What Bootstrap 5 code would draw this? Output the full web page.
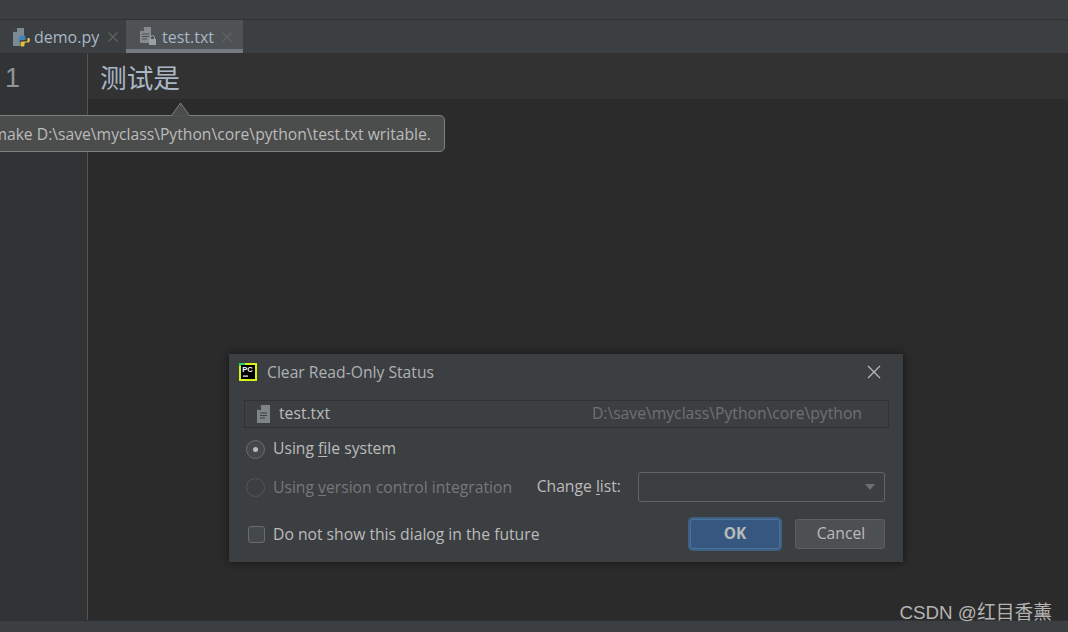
<!DOCTYPE html>
<html lang="zh">
<head>
<meta charset="utf-8">
<title>Clear Read-Only Status</title>
<link href="https://cdn.jsdelivr.net/npm/bootstrap@5.3.0/dist/css/bootstrap.min.css" rel="stylesheet">
<style>
html,body{height:100%;overflow:hidden}
body{background:#2b2b2b;font-family:"Open Sans","Noto Sans CJK SC",sans-serif;font-size:15.7px;color:#bbb;position:relative;width:1068px;height:632px}
.ide{height:632px}
.topbar{height:20px;background:#3c3f41;border-bottom:1px solid #323232;flex:none}
.tabbar{height:34px;background:#3c3f41;flex:none;border-bottom:1px solid #323232;font-size:16px}
.ftab{height:33px;color:#a9b7c6;line-height:1.2}
.ftab-a{width:126px;padding:1px 0 0 12px;gap:4px}
.ftab-a .tabx{margin-left:4px}
.ftab-b{width:117px;padding:5px 0 0 13px;gap:6px;background:#4e5254;border-bottom:4px solid #747a80}
.ftab-b svg.fi{margin-top:-2px}
.ftab span{padding-top:2px}
.tabx{color:#5f6364;flex:none}
.ftab-b .tabx{margin-left:1px}
.edit{min-height:0}
.gut{width:88px;background:#313335;border-right:1px solid #555;flex:none;color:#8f969b;font-family:"Liberation Sans",sans-serif;font-size:27px;padding-left:5px;line-height:49px}
.caretrow{height:45px;background:#323232;color:#a9b7c6;font-family:"Noto Sans CJK SC",sans-serif;font-size:26.7px;line-height:45px;padding-left:12px}
.statusb{height:12px;background:#3c3f41;border-top:1px solid #323232;flex:none}
.hint{position:absolute;left:-30px;top:115px;width:475px;height:37px;background:#4b4d4d;border:1px solid #7d8083;border-radius:0 5px 5px 0;line-height:36px;text-align:right;padding-right:13px;white-space:nowrap;color:#bbb;overflow:hidden}
.hintarrow{position:absolute;left:171px;top:102px;overflow:visible}
.dlg{position:absolute;left:229px;top:354px;width:674px;height:208px;background:#3c3f41;box-shadow:0 0 8px rgba(0,0,0,.55);color:#bbb}
.dlghead{height:36px;padding-left:10px;gap:10px;padding-right:22px}
.ptitle{color:#afb1b3;padding-top:2px}
.filebox{margin:10px 14px 0 15px;height:28px;border:1px solid #323232;border-bottom-color:#2f2f2f;background:#3c3f41;padding:0 26px 0 12px;color:#bbb}
.pth{color:#6f7172}
.optrow{height:24px;margin-left:17px;gap:8px;margin-top:9px}
.optrow2{margin-top:11px;height:30px;padding-right:18px}
.muted-t{color:#777;padding-top:2px}
.rad{width:19px;height:19px;border-radius:50%;border:1px solid #6b6b6b;background:#43494a;flex:none}
.radon{background:#43494a;position:relative;border-color:#6b6b6b}
.radon::after{content:"";position:absolute;left:6px;top:6px;width:5px;height:5px;border-radius:50%;background:#bbb}
.radoff{background:transparent;border-color:#53565a}
.chlbl{margin-right:9px}
.sel{width:247px;height:30px;border:1px solid #646464;border-radius:3px;background:#3c3f41;padding-right:9px}
.selarrow{width:0;height:0;border-left:5.5px solid transparent;border-right:5.5px solid transparent;border-top:6px solid #6f6f6f}
.bottomrow{margin-top:15px;margin-left:19px;margin-right:18px;height:34px}
.bottomrow .flex-grow-1{padding-top:2px}
.chk{width:17px;height:17px;border:1px solid #6b6b6b;border-radius:3px;background:#43494a;flex:none}
.okbtn{width:90px;height:30px;background:#365880;border:1px solid #4c7096;border-radius:3px;color:#bbb;font-weight:700;font-size:15.4px;padding:0;box-shadow:0 0 0 2px #3d6185;margin-right:15px}
.canbtn{width:90px;height:30px;background:#4c5052;border:1px solid #5e6060;border-radius:3px;color:#bbb;font-size:15.7px;padding:0 0 0 2px}
.canbtn:hover,.okbtn:hover{color:#bbb}
.wm{position:absolute;right:16px;top:601px;font-family:"Liberation Sans","Noto Sans CJK SC",sans-serif;font-size:18.8px;color:#b4b4b4;line-height:24px;white-space:nowrap}
u{text-underline-offset:2px}
</style>
</head>
<body>
<div class="ide d-flex flex-column">
  <div class="topbar"></div>
  <div class="tabbar d-flex">
    <div class="ftab ftab-a d-flex align-items-center">
      <svg width="18" height="20" viewBox="0 0 18 20"><path d="M1 5l4-4h7v9H8v9H1z" fill="#7d8a92"/><path d="M5 1v4H1z" fill="#3c3f41"/><path d="M7 11c0-2 1-2.500 3-2.500h1.500c1.500 0 2 .5 2 2V13H9.500c-1 0-1.500.5-1.500 1.500V16H7z" fill="#3d86b8"/><path d="M18 13c0 2-1 2.500-2.500 2.500H14c-1.500 0-1.500 1-1.500 2.500 0 1-1 1.500-2 1.500-1.500 0-2-.5-2-1.500v-2c0-1 .5-1.500 1.500-1.500H14c1 0 1.500-.5 1.500-1.500V11H17c.7 0 1 1 1 2z" fill="#e8bd3c"/></svg>
      <span>demo.py</span>
      <svg class="tabx" width="12" height="12" viewBox="0 0 12 12"><path d="M1.500 1.500l9 9m0-9l-9 9" stroke="currentColor" stroke-width="1.200"/></svg>
    </div>
    <div class="ftab ftab-b d-flex align-items-center">
      <svg class="fi" width="17" height="20" viewBox="0 0 17 20"><path d="M1 5l4-4h7v16H1z" fill="#858a8e"/><path d="M5 1v4H1z" fill="#4e5254"/><path d="M3 8h7M3 10.500h7M3 13h5" stroke="#4e5254" stroke-width="1.200"/><rect x="10" y="13" width="7" height="6" fill="#9aa0a4"/><path d="M11.500 13v-1.500a2 2 0 014 0V13" fill="none" stroke="#9aa0a4" stroke-width="1"/></svg>
      <span>test.txt</span>
      <svg class="tabx" width="12" height="12" viewBox="0 0 12 12"><path d="M1.500 1.500l9 9m0-9l-9 9" stroke="currentColor" stroke-width="1.200"/></svg>
    </div>
  </div>
  <div class="edit d-flex flex-grow-1">
    <div class="gut">1</div>
    <div class="flex-grow-1">
      <div class="caretrow">测试是</div>
    </div>
  </div>
  <div class="statusb"></div>
</div>

<div class="hint">make D:\save\myclass\Python\core\python\test.txt writable.</div>
<svg class="hintarrow" width="20" height="14" viewBox="0 0 20 14"><path d="M0.500 13.500L9.500 1 18.500 13.500" fill="#4b4d4d" stroke="#7d8083"/><path d="M1 14h17" stroke="#4b4d4d" stroke-width="1.500"/></svg>

<div class="dlg" role="dialog">
  <div class="dlghead d-flex align-items-center">
    <svg width="18" height="18" viewBox="0 0 18 18"><rect width="18" height="18" fill="#d6f21a"/><rect width="6" height="3" fill="#27d06a"/><rect x="2" y="2" width="14" height="14" fill="#000"/><text x="3.200" y="8.800" font-size="7.500" font-weight="700" font-family="Liberation Sans" fill="#fff">PC</text><rect x="4" y="12.500" width="5" height="1.200" fill="#fff"/></svg>
    <span class="ptitle flex-grow-1">Clear Read-Only Status</span>
    <svg width="14" height="14" viewBox="0 0 14 14"><path d="M1 1l12 12M13 1L1 13" stroke="#b5b7b9" stroke-width="1.300"/></svg>
  </div>
  <div class="filebox d-flex align-items-center">
    <svg width="14" height="18" viewBox="0 0 14 18"><path d="M0 5l4-5h9v18H0z" fill="#7f8487"/><path d="M4 0v5H0z" fill="#3c3f41"/><path d="M3 8h7M3 10.500h7M3 13h5" stroke="#3c3f41" stroke-width="1"/></svg>
    <span class="ms-2 flex-grow-1">test.txt</span>
    <span class="pth">D:\save\myclass\Python\core\python</span>
  </div>
  <div class="optrow d-flex align-items-center">
    <span class="rad radon"></span>
    <span>Using <u>f</u>ile system</span>
  </div>
  <div class="optrow optrow2 d-flex align-items-center">
    <span class="rad radoff"></span>
    <span class="muted-t">Using <u>v</u>ersion control integration</span>
    <span class="ms-auto chlbl">Change <u>l</u>ist:</span>
    <span class="sel d-flex align-items-center justify-content-end"><span class="selarrow"></span></span>
  </div>
  <div class="bottomrow d-flex align-items-center">
    <span class="chk me-2"></span>
    <span class="flex-grow-1">Do not show this dialog in the future</span>
    <button class="btn okbtn" type="button">OK</button>
    <button class="btn canbtn" type="button">Cancel</button>
  </div>
</div>
<div class="wm">CSDN @红目香薰</div>
<script src="https://cdn.jsdelivr.net/npm/bootstrap@5.3.0/dist/js/bootstrap.bundle.min.js"></script>
</body>
</html>
